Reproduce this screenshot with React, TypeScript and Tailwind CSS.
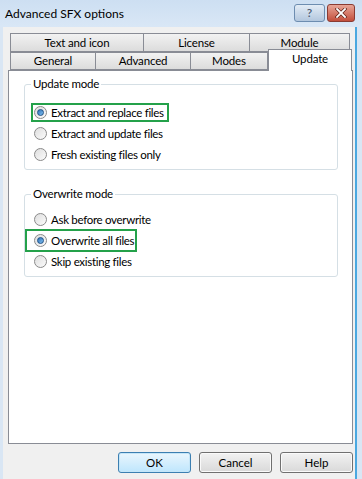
import React from 'react';

const font = { fontFamily: 'Lato, "Liberation Sans", sans-serif' };

const Radio: React.FC<{ checked?: boolean; label: string; mark?: string }> = ({ checked, label, mark }) => (
  <div className="relative flex h-[21px] items-center gap-[4px] pl-[9px]">
    {mark && <div className={`pointer-events-none absolute border-2 border-[#24a14a] ${mark}`} />}
    <span className="flex h-[13px] w-[13px] items-center justify-center rounded-full border border-[#8a8a8a] bg-gradient-to-br from-[#dedede] to-[#fbfbfb]">
      {checked && (
        <span className="h-[7px] w-[7px] rounded-full border border-[#1b4f86] bg-gradient-to-br from-[#2f6fb5] to-[#7fc0f0]" />
      )}
    </span>
    <span className="text-[11.5px] leading-none tracking-[-0.3px] text-black">{label}</span>
  </div>
);

const Group: React.FC<{ title: string; children: React.ReactNode; className?: string }> = ({ title, children, className }) => (
  <div className={`relative rounded-[3px] border border-[#d5dfe5] pb-[4px] ${className ?? ''}`}>
    <span className="absolute -top-[8px] left-[6px] bg-white px-[2px] text-[11.5px] leading-[14px] tracking-[-0.2px] text-black">{title}</span>
    {children}
  </div>
);

const Tab: React.FC<{ label: string; w: string }> = ({ label, w }) => (
  <div className={`${w} flex h-full items-center justify-center border border-r-0 border-[#898c95] bg-gradient-to-b from-[#f2f2f2] to-[#dcdcdc] text-[11.5px] leading-none tracking-[-0.15px] text-black last:border-r`}>
    {label}
  </div>
);

const Btn: React.FC<{ label: string; focus?: boolean }> = ({ label, focus }) => (
  <button
    className={`flex h-[21px] w-[73px] items-center justify-center rounded-[3px] border text-[11.5px] leading-none text-black ${
      focus
        ? 'border-[#3c7fb1] bg-gradient-to-b from-[#eaf6fd] to-[#bee6fd] shadow-[inset_0_0_0_1px_#c5e6f8]'
        : 'border-[#707070] bg-gradient-to-b from-[#f2f2f2] to-[#d9d9d9] shadow-[inset_0_0_0_1px_#fafafa]'
    }`}
  >
    {label}
  </button>
);

export default function App() {
  return (
    <div style={font} className="flex h-[479px] w-[362px] flex-col overflow-hidden bg-[#d9e6f4]">
      <div className="flex h-[27px] shrink-0 items-center justify-between bg-gradient-to-b from-[#cddff2] to-[#d9e7f6] pl-[5px] pr-[7px]">
        <span className="text-[12px] leading-none text-black">Advanced SFX options</span>
        <div className="flex items-center gap-[2px] self-start pt-[4px]">
          <div className="flex h-[18px] w-[31px] items-center justify-center rounded-[3px] border border-[#6d8db0] bg-gradient-to-b from-[#e3ecf6] to-[#b3c7de] text-[12px] font-semibold leading-none text-[#4a5d73]">
            ?
          </div>
          <div className="flex h-[18px] w-[28px] items-center justify-center rounded-[3px] border border-[#8a3b32] bg-gradient-to-b from-[#e7a597] to-[#c24d3b]">
            <svg width="12" height="10" viewBox="0 0 12 10">
              <path d="M2 1 L10 9 M10 1 L2 9" stroke="#5a1d14" strokeWidth="3.2" strokeLinecap="square" />
              <path d="M2 1 L10 9 M10 1 L2 9" stroke="#ffffff" strokeWidth="1.8" strokeLinecap="square" />
            </svg>
          </div>
        </div>
      </div>

      <div className="ml-[3px] mr-[5px] flex flex-1 flex-col border-r-2 border-[#4aa8e0] bg-[#f0f0f0] pl-[5px] pr-[2px] pt-[6px]">
        <div className="ml-[2px] flex h-[19px]">
          <Tab label="Text and icon" w="w-[133px]" />
          <Tab label="License" w="w-[106px]" />
          <Tab label="Module" w="w-[101px]" />
        </div>
        <div className="relative z-10 ml-[2px] flex h-[18px] items-end">
          <Tab label="General" w="w-[85px]" />
          <Tab label="Advanced" w="w-[95px]" />
          <div className="flex h-full w-[78px] items-center justify-center border border-[#898c95] bg-gradient-to-b from-[#f2f2f2] to-[#dcdcdc] text-[11.5px] leading-none tracking-[-0.15px] text-black">
            Modes
          </div>
          <div className="mb-[-1px] flex h-[22px] w-[84px] items-start justify-center border border-b-0 border-[#898c95] bg-white pt-[3px] text-[11.5px] leading-none tracking-[-0.15px] text-black">
            Update
          </div>
        </div>
        <div className="flex h-[374px] flex-col border border-[#898c95] bg-white pl-[15px] pr-[14px] pt-[13px]">
          <Group title="Update mode" className="pt-[17px]">
            <Radio checked label="Extract and replace files" mark="left-[6px] top-[1px] h-[19px] w-[138px]" />
            <Radio label="Extract and update files" />
            <Radio label="Fresh existing files only" />
          </Group>
          <Group title="Overwrite mode" className="mt-[24px] pt-[14px]">
            <Radio label="Ask before overwrite" />
            <Radio checked label="Overwrite all files" mark="left-[0px] top-[-1px] h-[23px] w-[112px]" />
            <Radio label="Skip existing files" />
          </Group>
        </div>
        <div className="flex justify-end gap-[8px] pt-[8px]">
          <Btn label="OK" focus />
          <Btn label="Cancel" />
          <Btn label="Help" />
        </div>
      </div>
    </div>
  );
}
